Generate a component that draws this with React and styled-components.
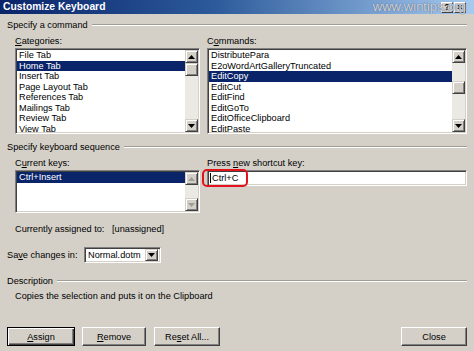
import React from "react";
import styled, { createGlobalStyle } from "styled-components";

const GlobalStyle = createGlobalStyle`
  html, body {
    margin: 0;
    padding: 0;
    background: #d4d0c8;
  }
`;

const Dialog = styled.div`
  width: 474px;
  height: 351px;
  overflow: hidden;
  background: #d4d0c8;
  font-family: "Liberation Sans", Arial, sans-serif;
  font-size: 9.2px;
  color: #000;
  display: flex;
  flex-direction: column;
`;

const TitleBar = styled.div`
  position: relative;
  height: 14px;
  display: flex;
  align-items: center;
  padding: 0 8px 0 3px;
  background: linear-gradient(to right, #0a246a 0%, #2c5a9a 45%, #a6caf0 100%);
`;

const Title = styled.div`
  flex: 1;
  color: #fff;
  font-weight: bold;
  font-size: 10.3px;
  line-height: 14px;
`;

const CaptionButton = styled.div`
  width: 10px;
  height: 9px;
  box-sizing: content-box;
  display: flex;
  align-items: center;
  justify-content: center;
  font-size: 9px;
  font-weight: bold;
  line-height: 9px;
  background: #d4d0c8;
  border: 1px solid;
  border-color: #fff #404040 #404040 #fff;
  margin-left: ${(p) => p.$gap || 0}px;
`;

const Watermark = styled.span`
  position: absolute;
  right: 8px;
  top: 0;
  font-size: 13px;
  line-height: 14px;
  color: rgba(225, 228, 235, 0.85);
  text-shadow: 0 0 1px #5d6f8a, 0 0 1px #5d6f8a;
  pointer-events: none;
`;

const Body = styled.div`
  display: flex;
  flex-direction: column;
  padding: 0 7px;
`;

const GroupHeader = styled.div`
  display: flex;
  align-items: center;
  gap: 4px;
  height: 10px;
  line-height: 10px;
  margin-top: ${(p) => p.$mt}px;
  white-space: nowrap;

  &::after {
    content: "";
    flex: 1;
    border-top: 1px solid #a09d96;
    border-bottom: 1px solid #fff;
  }
`;

const Columns = styled.div`
  display: flex;
  gap: 7px;
  padding-left: 8px;
  margin-top: ${(p) => p.$mt}px;
`;

const Column = styled.div`
  display: flex;
  flex-direction: column;
  flex: ${(p) => (p.$w ? "none" : 1)};
  width: ${(p) => (p.$w ? `${p.$w}px` : "auto")};
`;

const Label = styled.div`
  height: 10px;
  line-height: 10px;
  margin-bottom: 2px;
  white-space: nowrap;
`;

const Sunken = styled.div`
  box-sizing: border-box;
  background: #fff;
  border: 1px solid;
  border-color: #808080 #fff #fff #808080;
  box-shadow: inset 1px 1px #404040, inset -1px -1px #d4d0c8;
`;

const ListBox = styled(Sunken)`
  height: ${(p) => p.$h}px;
  display: flex;
  padding: 1px;
  overflow: hidden;
`;

const Items = styled.div`
  flex: 1;
  display: flex;
  flex-direction: column;
  overflow: hidden;
`;

const Item = styled.div`
  height: 10.5px;
  line-height: 10.5px;
  padding-left: 2px;
  white-space: nowrap;
  background: ${(p) => (p.$selected ? "#0a246a" : "transparent")};
  color: ${(p) => (p.$selected ? "#fff" : "#000")};
`;

const ScrollBar = styled.div`
  width: 13px;
  display: flex;
  flex-direction: column;
  background: #ebe9e4;
`;

const Track = styled.div`
  flex: 1;
`;

const Raised = styled.div`
  box-sizing: border-box;
  background: #d4d0c8;
  border: 1px solid;
  border-color: #d4d0c8 #404040 #404040 #d4d0c8;
  box-shadow: inset 1px 1px #fff, inset -1px -1px #808080;
`;

const ArrowButton = styled(Raised)`
  width: 13px;
  height: 13px;
  display: flex;
  align-items: center;
  justify-content: center;
`;

const Thumb = styled(Raised)`
  width: 13px;
  height: 13px;
  margin-top: ${(p) => p.$offset || 0}px;
`;

const Arrow = ({ down, disabled }) => (
  <svg width="7" height="4" viewBox="0 0 7 4">
    <polygon
      points={down ? "0,0 7,0 3.5,4" : "3.5,0 7,4 0,4"}
      fill={disabled ? "#a09d96" : "#000"}
    />
  </svg>
);

function Scroll({ thumb, offset, disabled }) {
  return (
    <ScrollBar>
      <ArrowButton>
        <Arrow disabled={disabled} />
      </ArrowButton>
      <Track>{thumb && <Thumb $offset={offset} />}</Track>
      <ArrowButton>
        <Arrow down disabled={disabled} />
      </ArrowButton>
    </ScrollBar>
  );
}

const KeyField = styled(Sunken)`
  position: relative;
  height: 16px;
  display: flex;
  align-items: center;
  padding-left: 2px;
`;

const Caret = styled.span`
  width: 1px;
  height: 10px;
  background: #000;
  margin-right: 1px;
`;

const Highlight = styled.div`
  position: absolute;
  left: -6px;
  top: -2px;
  width: 46px;
  height: 18px;
  box-sizing: border-box;
  border: 2px solid #e3121c;
  border-radius: 5px;
`;

const InfoRow = styled.div`
  display: flex;
  align-items: center;
  padding-left: ${(p) => p.$indent || 0}px;
  margin-top: ${(p) => p.$mt}px;
  line-height: 10px;
  white-space: nowrap;
`;

const InfoLabel = styled.span`
  width: ${(p) => p.$w}px;
  flex: none;
`;

const Combo = styled(Sunken)`
  width: 77px;
  height: 16px;
  display: flex;
  align-items: center;
  padding: 2px;
`;

const ComboText = styled.span`
  flex: 1;
  padding-left: 1px;
`;

const ComboButton = styled(ArrowButton)`
  height: 12px;
`;

const ButtonRow = styled.div`
  display: flex;
  margin-top: 26px;
`;

const Button = styled.div`
  box-sizing: border-box;
  width: ${(p) => p.$w}px;
  height: 19px;
  margin-left: ${(p) => p.$ml || 0}px;
  display: flex;
  align-items: center;
  justify-content: center;
  background: #d4d0c8;
  border: 1px solid;
  border-color: ${(p) => (p.$default ? "#000" : "#fff #404040 #404040 #fff")};
  box-shadow: ${(p) =>
    p.$default
      ? "inset 1px 1px #fff, inset -1px -1px #404040, inset -2px -2px #808080"
      : "inset -1px -1px #808080"};
`;

const Spacer = styled.div`
  flex: 1;
`;

const categories = [
  "File Tab",
  "Home Tab",
  "Insert Tab",
  "Page Layout Tab",
  "References Tab",
  "Mailings Tab",
  "Review Tab",
  "View Tab",
];

const commands = [
  "DistributePara",
  "E2oWordArtGalleryTruncated",
  "EditCopy",
  "EditCut",
  "EditFind",
  "EditGoTo",
  "EditOfficeClipboard",
  "EditPaste",
];

export default function App() {
  return (
    <>
      <GlobalStyle />
      <Dialog>
        <TitleBar>
          <Title>Customize Keyboard</Title>
          <CaptionButton>?</CaptionButton>
          <CaptionButton $gap={1}>×</CaptionButton>
          <Watermark>www.wintips.org</Watermark>
        </TitleBar>

        <Body>
          <GroupHeader $mt={6}>Specify a command</GroupHeader>
          <Columns $mt={6}>
            <Column $w={185}>
              <Label>
                <u>C</u>ategories:
              </Label>
              <ListBox $h={86}>
                <Items>
                  {categories.map((c) => (
                    <Item key={c} $selected={c === "Home Tab"}>
                      {c}
                    </Item>
                  ))}
                </Items>
                <Scroll thumb offset={0} />
              </ListBox>
            </Column>
            <Column>
              <Label>
                C<u>o</u>mmands:
              </Label>
              <ListBox $h={86}>
                <Items>
                  {commands.map((c) => (
                    <Item key={c} $selected={c === "EditCopy"}>
                      {c}
                    </Item>
                  ))}
                </Items>
                <Scroll thumb offset={18} />
              </ListBox>
            </Column>
          </Columns>

          <GroupHeader $mt={8}>Specify keyboard sequence</GroupHeader>
          <Columns $mt={6}>
            <Column $w={185}>
              <Label>
                C<u>u</u>rrent keys:
              </Label>
              <ListBox $h={43}>
                <Items>
                  <Item $selected>Ctrl+Insert</Item>
                </Items>
                <Scroll disabled />
              </ListBox>
            </Column>
            <Column>
              <Label>
                Press <u>n</u>ew shortcut key:
              </Label>
              <KeyField>
                <Caret />
                Ctrl+C
                <Highlight />
              </KeyField>
            </Column>
          </Columns>

          <InfoRow $indent={8} $mt={11}>
            <InfoLabel $w={97}>Currently assigned to:</InfoLabel>
            <span>[unassigned]</span>
          </InfoRow>

          <InfoRow $mt={13}>
            <InfoLabel $w={77}>
              Sa<u>v</u>e changes in:
            </InfoLabel>
            <Combo>
              <ComboText>Normal.dotm</ComboText>
              <ComboButton>
                <Arrow down />
              </ComboButton>
            </Combo>
          </InfoRow>

          <GroupHeader $mt={13}>Description</GroupHeader>
          <InfoRow $indent={8} $mt={5}>
            Copies the selection and puts it on the Clipboard
          </InfoRow>

          <ButtonRow>
            <Button $w={68} $default>
              <span>
                <u>A</u>ssign
              </span>
            </Button>
            <Button $w={64} $ml={7}>
              <span>
                <u>R</u>emove
              </span>
            </Button>
            <Button $w={66} $ml={8}>
              <span>
                Re<u>s</u>et All...
              </span>
            </Button>
            <Spacer />
            <Button $w={66}>Close</Button>
          </ButtonRow>
        </Body>
      </Dialog>
    </>
  );
}
